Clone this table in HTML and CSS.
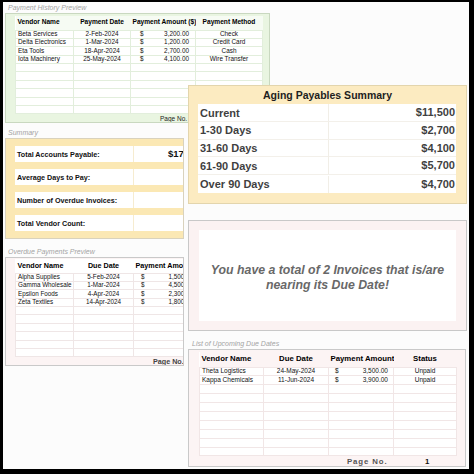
FILE: index.html
```html
<!DOCTYPE html>
<html lang="en">
<head>
<meta charset="utf-8">
<title>Accounts Payable Dashboard</title>
<link rel="stylesheet" href="styles.css">
</head>
<body>
<div class="desk">

  <section class="win win-pay">
    <div class="win-title">Payment History Preview</div>
    <div class="sheet sheet-green">
      <table class="grid grid-pay">
        <colgroup><col class="c58"><col class="c57"><col class="c65"><col class="c67"></colgroup>
        <thead>
          <tr><th class="l">Vendor Name</th><th>Payment Date</th><th>Payment Amount ($)</th><th>Payment Method</th></tr>
        </thead>
        <tbody>
          <tr><td class="l">Beta Services</td><td>2-Feb-2024</td><td><span class="amt"><span>$</span><span>3,200.00</span></span></td><td>Check</td></tr>
          <tr><td class="l">Delta Electronics</td><td>1-Mar-2024</td><td><span class="amt"><span>$</span><span>1,200.00</span></span></td><td>Credit Card</td></tr>
          <tr><td class="l">Eta Tools</td><td>18-Apr-2024</td><td><span class="amt"><span>$</span><span>2,700.00</span></span></td><td>Cash</td></tr>
          <tr><td class="l">Iota Machinery</td><td>25-May-2024</td><td><span class="amt"><span>$</span><span>4,100.00</span></span></td><td>Wire Transfer</td></tr>
          <tr><td></td><td></td><td></td><td></td></tr>
          <tr><td></td><td></td><td></td><td></td></tr>
          <tr><td></td><td></td><td></td><td></td></tr>
          <tr><td></td><td></td><td></td><td></td></tr>
          <tr><td></td><td></td><td></td><td></td></tr>
          <tr><td></td><td></td><td></td><td></td></tr>
        </tbody>
      </table>
      <div class="foot foot-pay"><span class="pg">Page No.</span><span class="pgn">1</span></div>
    </div>
  </section>

  <section class="win win-sum">
    <div class="win-title">Summary</div>
    <div class="sheet sheet-yellow">
      <div class="sum-row"><span class="sum-l">Total Accounts Payable:</span><span class="sum-v">$17,500</span></div>
      <div class="sum-row"><span class="sum-l">Average Days to Pay:</span><span class="sum-v"></span></div>
      <div class="sum-row"><span class="sum-l">Number of Overdue Invoices:</span><span class="sum-v"></span></div>
      <div class="sum-row"><span class="sum-l">Total Vendor Count:</span><span class="sum-v"></span></div>
    </div>
  </section>

  <section class="win win-over">
    <div class="win-title">Overdue Payments Preview</div>
    <div class="sheet sheet-pink">
      <table class="grid grid-over">
        <colgroup><col class="c58"><col class="c60"><col class="c66"></colgroup>
        <thead>
          <tr><th class="l">Vendor Name</th><th>Due Date</th><th>Payment Amount ($)</th></tr>
        </thead>
        <tbody>
          <tr><td class="l">Alpha Supplies</td><td>5-Feb-2024</td><td><span class="amt"><span>$</span><span>1,500.00</span></span></td></tr>
          <tr><td class="l">Gamma Wholesale</td><td>1-Mar-2024</td><td><span class="amt"><span>$</span><span>4,500.00</span></span></td></tr>
          <tr><td class="l">Epsilon Foods</td><td>4-Apr-2024</td><td><span class="amt"><span>$</span><span>2,300.00</span></span></td></tr>
          <tr><td class="l">Zeta Textiles</td><td>14-Apr-2024</td><td><span class="amt"><span>$</span><span>1,800.00</span></span></td></tr>
          <tr><td></td><td></td><td></td></tr>
          <tr><td></td><td></td><td></td></tr>
          <tr><td></td><td></td><td></td></tr>
          <tr><td></td><td></td><td></td></tr>
          <tr><td></td><td></td><td></td></tr>
          <tr><td></td><td></td><td></td></tr>
        </tbody>
      </table>
      <div class="foot foot-over"><span class="pg">Page No.</span></div>
    </div>
  </section>

  <section class="win win-aging">
    <h2 class="aging-title">Aging Payables Summary</h2>
    <div class="aging-rows">
      <div class="aging-row"><span>Current</span><span>$11,500</span></div>
      <div class="aging-row"><span>1-30 Days</span><span>$2,700</span></div>
      <div class="aging-row"><span>31-60 Days</span><span>$4,100</span></div>
      <div class="aging-row"><span>61-90 Days</span><span>$5,700</span></div>
      <div class="aging-row"><span>Over 90 Days</span><span>$4,700</span></div>
    </div>
  </section>

  <section class="win win-msg">
    <div class="msg-inner">
      <p class="msg-text">You have a total of 2 Invoices that is/are<br>nearing its Due Date!</p>
    </div>
  </section>

  <section class="win win-list">
    <div class="win-title">List of Upcoming Due Dates</div>
    <div class="sheet sheet-pink sheet-list">
      <table class="grid grid-list">
        <colgroup><col class="c64"><col class="c65"><col class="c65"><col class="c63"></colgroup>
        <thead>
          <tr><th class="l">Vendor Name</th><th>Due Date</th><th>Payment Amount ($)</th><th>Status</th></tr>
        </thead>
        <tbody>
          <tr><td class="l">Theta Logistics</td><td>24-May-2024</td><td><span class="amt"><span>$</span><span>3,500.00</span></span></td><td>Unpaid</td></tr>
          <tr><td class="l">Kappa Chemicals</td><td>11-Jun-2024</td><td><span class="amt"><span>$</span><span>3,900.00</span></span></td><td>Unpaid</td></tr>
          <tr><td></td><td></td><td></td><td></td></tr>
          <tr><td></td><td></td><td></td><td></td></tr>
          <tr><td></td><td></td><td></td><td></td></tr>
          <tr><td></td><td></td><td></td><td></td></tr>
          <tr><td></td><td></td><td></td><td></td></tr>
          <tr><td></td><td></td><td></td><td></td></tr>
          <tr><td></td><td></td><td></td><td></td></tr>
          <tr><td></td><td></td><td></td><td></td></tr>
        </tbody>
      </table>
      <div class="foot foot-list"><span class="pg">Page No.</span><span class="pgn">1</span></div>
    </div>
  </section>

</div>
</body>
</html>
```

FILE: styles.css
```css
* { box-sizing: border-box; margin: 0; padding: 0; }

body {
  background: #000;
  font-family: "Liberation Sans", Arial, sans-serif;
  color: #111;
}

.desk {
  position: relative;
  width: 474px;
  height: 474px;
  border-style: solid;
  border-color: #000;
  border-width: 2px 5px 5px 3px;
  background: #fcfcfc;
  overflow: hidden;
}

/* windows placed freely on the desk */
.win { position: absolute; display: flex; flex-direction: column; }

.win-title {
  height: 10px;
  line-height: 10px;
  font-size: 7px;
  font-style: italic;
  color: #a3a3a3;
  padding-left: 3px;
  white-space: nowrap;
}

.sheet { border: 1px solid #cfd3cc; overflow: hidden; flex: none; }

.sheet-green { background: #e9f5e1; border-color: #c9d8c0; height: 110px; padding: 2px 0 0 9px; }
.sheet-yellow { background: #fbe8b4; border-color: #d9d2bd; height: 101px; padding: 7px 0 0 9px; display: flex; flex-direction: column; gap: 7px; }
.sheet-pink { background: #fcf4f4; border-color: #c9c9c9; }

.win-pay  { left: 2px;  top: 1px;   width: 265px; }
.win-sum  { left: 2px;  top: 126px; width: 179px; }
.win-over { left: 2px;  top: 245px; width: 179px; }
.win-over .sheet { height: 109px; padding: 1px 0 0 9px; }
.win-list { left: 185px; top: 337px; width: 278px; }
.win-list .win-title { padding-left: 4px; }
.sheet-list { height: 118px; padding: 2px 0 0 10px; }

/* tables */
.grid { border-collapse: collapse; table-layout: fixed; background: #fff; }
.grid th, .grid td {
  white-space: nowrap;
  overflow: hidden;
  text-align: center;
  padding: 0 2px;
  line-height: 1;
}
.grid th { font-weight: bold; color: #000; }
.grid td { border: 1px solid #e6efe1; }
.grid .l { text-align: left; }

.amt { display: flex; justify-content: space-between; }

.c57 { width: 57px; } .c58 { width: 58px; } .c60 { width: 60px; }
.c63 { width: 63px; } .c64 { width: 64px; } .c65 { width: 65px; }
.c66 { width: 66px; } .c67 { width: 67px; }

.grid-pay { width: 247px; }
.grid-pay th { height: 14px; font-size: 6.6px; background: #f6fbf3; }
.grid-pay td { height: 8.4px; font-size: 6.4px; border-color: #e2eedc; }
.grid-pay td:nth-child(3) { padding: 0 6px 0 9px; }

.grid-over { width: 184px; }
.grid-over th { height: 14px; font-size: 7.2px; background: #fff; }
.grid-over td { height: 8.4px; font-size: 6.3px; border-color: #efe6e6; }
.grid-over td:nth-child(3) { padding: 0 6px 0 7px; }

.grid-list { width: 257px; }
.grid-list th { height: 15px; font-size: 7.8px; background: #fcf4f4; }
.grid-list td { height: 8.9px; font-size: 6.5px; border-color: #f1e6e6; }
.grid-list td:nth-child(3) { padding: 0 5px 0 6px; }

/* sheet footers */
.foot { display: flex; align-items: center; white-space: nowrap; }
.foot-pay { height: 8px; font-size: 6.5px; color: #222; padding-left: 145px; gap: 50px; }
.foot-over { height: 8px; font-size: 7.2px; font-weight: bold; color: #444; padding-left: 138px; }
.foot-list { height: 10px; font-size: 7.8px; font-weight: bold; color: #555; padding-left: 148px; }
.foot-list .pg { letter-spacing: 0.9px; width: 78px; }
.foot-list .pgn { color: #111; }

/* summary */
.sum-row {
  display: grid;
  grid-template-columns: 118px 60px;
  height: 16px;
  background: #fff;
  align-items: center;
}
.sum-l { font-size: 7.2px; font-weight: bold; padding-left: 2px; white-space: nowrap; }
.sum-v {
  height: 100%;
  border-left: 1px solid #f6ecd0;
  font-size: 9.5px;
  font-weight: bold;
  padding-left: 34px;
  line-height: 16px;
  white-space: nowrap;
}

/* aging payables */
.win-aging {
  left: 185px; top: 83px; width: 279px; height: 119px;
  background: #fcebc1;
  border: 1px solid #e3d5ad;
  padding: 0 10px 0 9px;
}
.aging-title {
  height: 18px;
  line-height: 18px;
  text-align: center;
  font-size: 10.5px;
  font-weight: bold;
  color: #1e1e1e;
  margin-right: -10px;
  margin-left: -9px;
}
.aging-rows { background: #fff; display: flex; flex-direction: column; }
.aging-row {
  display: grid;
  grid-template-columns: 130px 1fr;
  height: 17.8px;
  align-items: center;
  font-size: 11px;
  font-weight: bold;
  color: #3f3f3f;
  border-bottom: 1px solid #f3f0ea;
}
.aging-row:last-child { border-bottom: none; }
.aging-row span:first-child { padding-left: 2px; }
.aging-row span:last-child {
  text-align: right;
  padding-right: 1px;
  border-left: 1px solid #f1eee7;
  line-height: 17px;
}

/* message */
.win-msg {
  left: 185px; top: 218px; width: 279px; height: 111px;
  background: #fbf2f2;
  border: 1px solid #c8c8c8;
  padding: 9px 10px 9px 10px;
}
.msg-inner {
  flex: 1;
  background: #fff;
  display: flex;
  align-items: center;
  justify-content: center;
}
.msg-text {
  font-size: 12.3px;
  line-height: 15px;
  font-weight: bold;
  font-style: italic;
  color: #686868;
  text-align: center;
  margin-top: 5px;
}
```
